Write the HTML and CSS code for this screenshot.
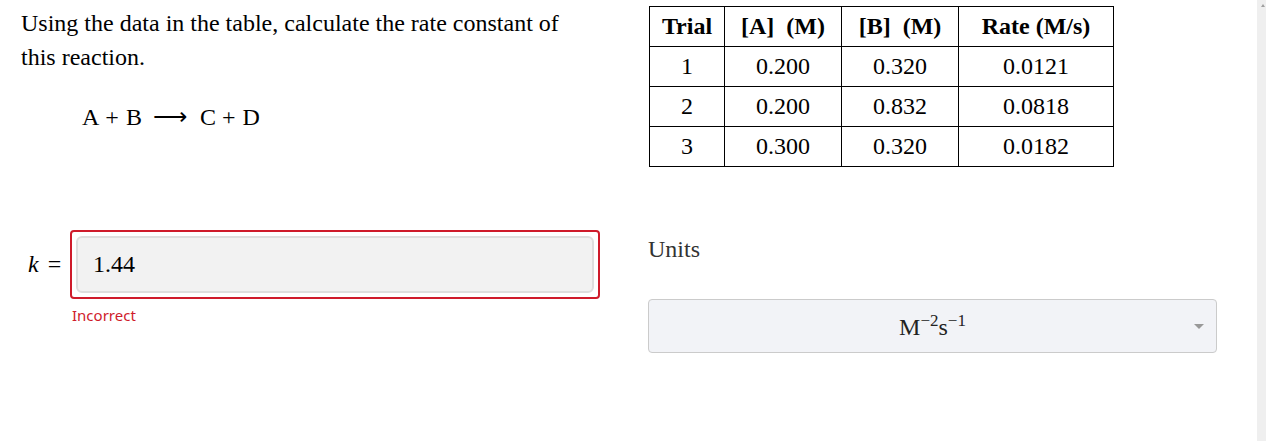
FILE: index.html
```html
<!DOCTYPE html>
<html lang="en">
<head>
  <meta charset="UTF-8" />
  <meta name="viewport" content="width=device-width, initial-scale=1.0"/>
  <title>Rate Constant Question</title>
  <link rel="stylesheet" href="styles.css">
</head>
<body>

  <div class="page">
    <main class="content">

      <!-- Question and data table -->
      <section class="top">
        <div class="prompt">
          <p class="question">Using the data in the table, calculate the rate constant of this reaction.</p>
          <p class="equation">A<span class="op">+</span>B<span class="arrow">&#10230;</span>C<span class="op">+</span>D</p>
        </div>

        <table class="data-table">
          <thead>
            <tr>
              <th class="col-trial">Trial</th>
              <th class="col-a">[A]&nbsp; (M)</th>
              <th class="col-b">[B]&nbsp; (M)</th>
              <th class="col-rate">Rate (M/s)</th>
            </tr>
          </thead>
          <tbody>
            <tr><td>1</td><td>0.200</td><td>0.320</td><td>0.0121</td></tr>
            <tr><td>2</td><td>0.200</td><td>0.832</td><td>0.0818</td></tr>
            <tr><td>3</td><td>0.300</td><td>0.320</td><td>0.0182</td></tr>
          </tbody>
        </table>
      </section>

      <!-- Answer + units -->
      <section class="bottom">
        <div class="answer">
          <div class="answer-row">
            <span class="k-label"><i>k</i><span class="eq">=</span></span>
            <div class="input-wrap">
              <div class="input">1.44</div>
            </div>
          </div>
          <div class="feedback">Incorrect</div>
        </div>

        <div class="units">
          <div class="units-label">Units</div>
          <div class="select">
            <span>M<sup>&minus;2</sup>s<sup>&minus;1</sup></span>
            <span class="caret"></span>
          </div>
        </div>
      </section>

    </main>
    <div class="scrollbar"></div>
  </div>

</body>
</html>
```

FILE: styles.css
```css
body {
  margin: 0;
  font-family: "Liberation Serif", "Times New Roman", serif;
  color: #000;
  background: #fff;
}

.page {
  display: flex;
  height: 100vh;
  overflow: hidden;
}

.content {
  flex: 1;
}

.scrollbar {
  width: 9px;
  background: #efefef;
  position: relative;
}

.scrollbar::before {
  content: "";
  position: absolute;
  top: 4px;
  left: 4px;
  border-left: 2px solid transparent;
  border-right: 2px solid transparent;
  border-bottom: 3px solid #a0a0a0;
}

/* Top row */
.top {
  display: flex;
  padding-top: 6px;
}

.prompt {
  width: 649px;
  padding-left: 21px;
  box-sizing: border-box;
}

.prompt p {
  margin: 0;
  font-size: 24px;
  line-height: 34px;
}

.question {
  width: 555px;
}

.equation {
  margin-top: 26px !important;
  padding-left: 61px;
}

.equation .op {
  margin: 0 7px 0 6px;
}

.equation .arrow {
  margin: 0 13px 0 11px;
}

.data-table {
  border-collapse: collapse;
  font-size: 24px;
}

.data-table th,
.data-table td {
  border: 1px solid #000;
  text-align: center;
  padding: 0;
  height: 39px;
}

.data-table th {
  font-weight: bold;
}

.col-trial { width: 74px; }
.col-a { width: 116px; }
.col-b { width: 116px; }
.col-rate { width: 154px; }

/* Bottom row */
.bottom {
  display: flex;
  margin-top: 63px;
}

.answer {
  width: 648px;
  padding-left: 28px;
  box-sizing: border-box;
}

.answer-row {
  display: flex;
  align-items: center;
}

.k-label {
  width: 42px;
  font-size: 24px;
}

.k-label .eq {
  margin-left: 9px;
}

.input-wrap {
  width: 530px;
  height: 69px;
  border: 2px solid #cf1b2b;
  border-radius: 4px;
  padding: 4px;
  box-sizing: border-box;
}

.input {
  height: 100%;
  box-sizing: border-box;
  background: #f2f2f2;
  border: 2px solid #dedede;
  border-radius: 6px;
  padding-left: 15px;
  font-size: 24px;
  display: flex;
  align-items: center;
}

.feedback {
  margin: 6px 0 0 44px;
  font-family: "Noto Sans", "Open Sans", sans-serif;
  font-size: 15px;
  line-height: 20px;
  color: #cf1b2b;
}

.units {
  padding-top: 2px;
}

.units-label {
  font-size: 24px;
  line-height: 34px;
  color: #333;
}

.select {
  position: relative;
  margin-top: 33px;
  width: 569px;
  height: 54px;
  box-sizing: border-box;
  border: 1px solid #cbcbcb;
  border-radius: 4px;
  background: #f2f3f7;
  display: flex;
  align-items: center;
  justify-content: center;
  font-size: 24px;
  color: #222;
}

.select sup {
  font-size: 17px;
}

.caret {
  position: absolute;
  right: 12px;
  top: 24px;
  border-left: 5px solid transparent;
  border-right: 5px solid transparent;
  border-top: 5px solid #999;
}
```
